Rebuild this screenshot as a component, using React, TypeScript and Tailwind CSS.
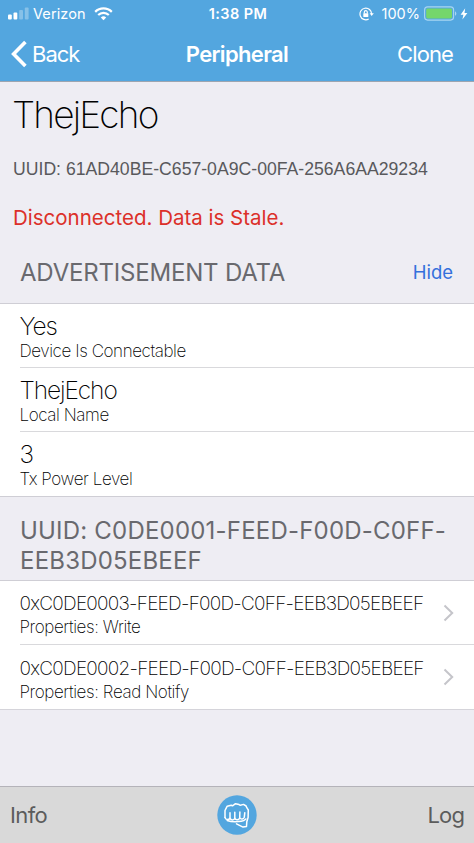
import React from "react";

const thin = "font-['Inter','Liberation_Sans',sans-serif] font-extralight whitespace-nowrap";

function StatusBar() {
  return (
    <div className="flex h-[27px] items-center pl-[8px] pr-[6px] text-[14.5px] text-white">
      <div className="flex flex-1 items-center">
        <svg width="22" height="13" viewBox="0 0 22 13" fill="#fff">
          <rect x="0" y="7.500" width="3.800" height="5" rx="1" />
          <rect x="5.500" y="5.500" width="3.800" height="7" rx="1" />
          <rect x="11.200" y="3" width="3.800" height="9.500" rx="1" opacity=".3" />
          <rect x="16.800" y="0.500" width="3.800" height="12" rx="1" opacity=".3" />
        </svg>
        <span className="ml-[3px] tracking-[0.1px]">Verizon</span>
        <svg className="ml-[8px]" width="19" height="14" viewBox="0 0 19 14" fill="none" stroke="#fff" strokeWidth="2.2">
          <path d="M1.2 4.9a11.7 11.7 0 0 1 16.6 0" />
          <path d="M4.2 8a7.5 7.5 0 0 1 10.6 0" />
          <path d="M9.5 13.2 6.8 10.5a3.8 3.8 0 0 1 5.4 0z" fill="#fff" stroke="none" />
        </svg>
      </div>
      <span className="font-semibold tracking-[0.4px]">1:38 PM</span>
      <div className="flex flex-1 items-center justify-end">
        <svg className="-ml-px" width="16" height="14" viewBox="0 0 16 14" fill="none" stroke="#fff" strokeWidth="1.2">
          <path d="M12.6 7A5.8 5.8 0 1 0 9.7 12" />
          <path d="M10.6 6.2h4.2l-2.1 2.8z" fill="#fff" stroke="none" />
          <rect x="4.3" y="6.3" width="5" height="3.7" rx=".5" fill="#fff" stroke="none" />
          <path d="M5.3 6.5V5.2a1.5 1.5 0 0 1 3 0v1.3" />
        </svg>
        <span className="ml-[7px]">100%</span>
        <svg className="ml-[4px]" width="34" height="15" viewBox="0 0 34 15">
          <rect x=".6" y=".9" width="29" height="13.2" rx="3" fill="none" stroke="#a9d6f2" strokeWidth="1.1" />
          <rect x="2.2" y="2.5" width="25.8" height="10" rx="1.4" fill="#75d66b" />
          <path d="M31 5.2c1.8.8 1.8 3.8 0 4.6z" fill="#a9d6f2" />
        </svg>
        <svg className="ml-[2px]" width="8" height="12" viewBox="0 0 8 12" fill="#fff">
          <path d="M5.2.3.6 6.7h2.8L2.4 11.6 7.4 5H4.5z" />
        </svg>
      </div>
    </div>
  );
}

function NavBar() {
  return (
    <div className="grid h-[54px] grid-cols-[1fr_auto_1fr] items-center text-[22px] text-white">
      <div className="flex items-center pl-[11px]">
        <svg width="16" height="28" viewBox="0 0 16 28" fill="none" stroke="#fff" strokeWidth="3.6">
          <path d="M14.4 2 2.6 14l11.8 12" />
        </svg>
        <span className="ml-[5px] tracking-[-1px]">Back</span>
      </div>
      <span className="font-semibold tracking-[-0.65px]">Peripheral</span>
      <span className="pr-[21px] text-right tracking-[-0.9px]">Clone</span>
    </div>
  );
}

function DataRow({ value, label, last }: { value: string; label: string; last?: boolean }) {
  return (
    <div className={last ? "ml-5 h-16 pt-[7px]" : "ml-5 h-16 border-b border-[#d9d9dc] pt-[7px]"}>
      <div className={`${thin} -ml-[0.5px] text-[24.5px] leading-[30px] tracking-[-1.1px] text-black`}>{value}</div>
      <div className={`${thin} -ml-[0.5px] text-[17px] leading-[21px] tracking-[-0.42px] text-black`}>{label}</div>
    </div>
  );
}

function CharacteristicRow({ uuid, props, last }: { uuid: string; props: string; last?: boolean }) {
  return (
    <div className={last ? "ml-5 flex h-16 items-center" : "ml-5 flex h-16 items-center border-b border-[#d9d9dc]"}>
      <div className="flex-1 pt-[6px]">
        <div className={`${thin} -ml-[0.5px] text-[19px] leading-[24px] tracking-[-0.75px] text-black`}>{uuid}</div>
        <div className={`${thin} -ml-[0.5px] text-[17px] leading-[23px] tracking-[-0.4px] text-black`}>{props}</div>
      </div>
      <svg className="mr-5" width="11" height="18" viewBox="0 0 11 18" fill="none" stroke="#c5c5ca" strokeWidth="2">
        <path d="m1.5 1.5 7.700 7.500-7.700 7.500" />
      </svg>
    </div>
  );
}

function Fist() {
  return (
    <svg width="40" height="40" viewBox="0 0 40 40" fill="none" stroke="#fff" strokeWidth="1.5" strokeLinecap="round" strokeLinejoin="round">
      <circle cx="20" cy="20" r="19.7" fill="#53a6df" stroke="none" />
      <path d="M8 22.500V15.500l2.200-4.300 4-1 1.300.6 3-2.100 3.600.9 1.200.7 3.200-.9 2.600 1.600.7 1.700 1.500 2.300-.2 7.500-1.300 4.200-.3 4.700-3.500.7-6.500-3.200" />
      <path d="M8 22.500c.4 2.400 3.600 2.800 5 .8.800 2.200 3.900 2.200 4.800 0 .8 2 4 2 4.900-.4 1.300 1.700 3.700 1.500 4.600-.7l.5-4.500" />
      <path d="M13 23.300v-5.500M17.800 23.300v-6M22.700 22.900l.2-5.900" />
      <path d="M10.200 25.500c3.500 1.300 10.500 1.300 14 .8 2-.3 3.500-1.200 4.700-2.300" />
    </svg>
  );
}

export default function App() {
  return (
    <div className="flex h-[843px] w-[474px] flex-col overflow-hidden bg-[#eeedf3] font-['Inter','Liberation_Sans',sans-serif]">
      <header className="h-[82px] shrink-0 border-b border-[#9da5b0] bg-[#53a6df]">
        <StatusBar />
        <NavBar />
      </header>

      <section className="h-[157px] pl-[13px] pt-[11px]">
        <h1 className={`${thin} -ml-px text-[37px] leading-[44px] tracking-[-1.800px] text-black`}>ThejEcho</h1>
        <p className="mt-[21px] font-['Liberation_Sans',Arial,sans-serif] text-[17.650px] leading-[22px] whitespace-nowrap text-[#59595c]">
          UUID: 61AD40BE-C657-0A9C-00FA-256A6AA29234
        </p>
        <p className="mt-[25px] text-[20.500px] leading-[26px] whitespace-nowrap text-[#dc3029]">Disconnected. Data is Stale.</p>
      </section>

      <div className="flex h-[65px] items-center justify-between border-b border-[#cfced5] pl-5 pr-[21px] pt-[3px]">
        <h2 className="text-[24px] tracking-[-0.200px] text-[#69696e]">ADVERTISEMENT DATA</h2>
        <button className="text-[18.500px] text-[#3470dc]">Hide</button>
      </div>
      <section className="bg-white">
        <DataRow value="Yes" label="Device Is Connectable" />
        <DataRow value="ThejEcho" label="Local Name" />
        <DataRow value="3" label="Tx Power Level" last />
      </section>

      <div className="h-[85px] border-y border-[#cfced5] pl-5 pt-[19px]">
        <h2 className="text-[24px] leading-[30px] tracking-[0.200px] whitespace-nowrap text-[#69696e]">
          UUID: C0DE0001-FEED-F00D-C0FF-
          <br />
          EEB3D05EBEEF
        </h2>
      </div>
      <section className="border-b border-[#d5d4da] bg-white">
        <CharacteristicRow uuid="0xC0DE0003-FEED-F00D-C0FF-EEB3D05EBEEF" props="Properties: Write" />
        <CharacteristicRow uuid="0xC0DE0002-FEED-F00D-C0FF-EEB3D05EBEEF" props="Properties: Read Notify" last />
      </section>

      <footer className="mt-auto flex h-[57px] items-center border-t border-[#b4b3b9] bg-[#d9d9d9] px-[10px] text-[22px] text-[#5c5c5c]">
        <span className="flex-1 tracking-[-0.600px]">Info</span>
        <Fist />
        <span className="flex-1 text-right tracking-[-0.900px]">Log</span>
      </footer>
    </div>
  );
}
